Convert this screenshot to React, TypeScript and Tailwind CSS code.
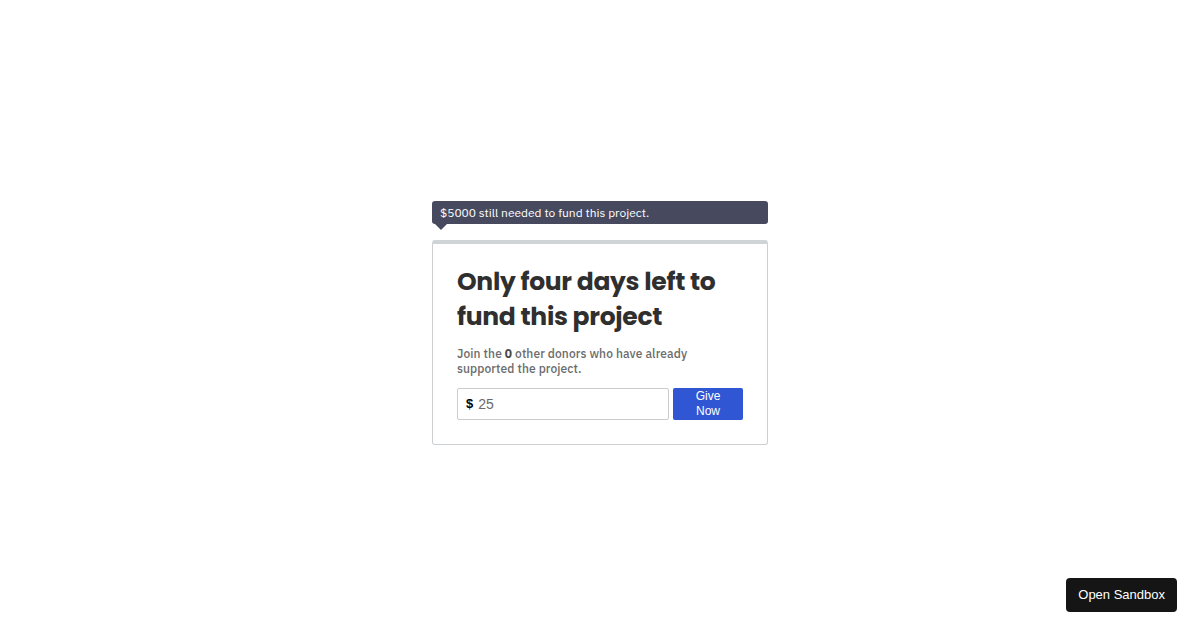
import React, { useState } from 'react';

export default function App() {
  const [amount, setAmount] = useState('25');

  return (
    <div className="relative w-full h-[630px] bg-white overflow-hidden">
      <div className="flex h-full items-center justify-center">
        <div className="w-[336px] mt-[16px]">
          {/* Tooltip */}
          <div className="relative h-[23px] rounded-[3px] bg-[#474a5f] px-[8px] flex items-center text-[12px] text-white font-['IBM_Plex_Sans','Noto_Sans',sans-serif]">
            $5000 still needed to fund this project.
            <span className="absolute left-[3px] top-full w-0 h-0 border-l-[6px] border-r-[6px] border-t-[6px] border-l-transparent border-r-transparent border-t-[#474a5f]" />
          </div>

          {/* Card */}
          <div className="mt-[16px] rounded-[3px] border border-[#ccd0d3] border-t-[4px] border-t-[#cfd4d6] px-[24px] pt-[20px] pb-[24px]">
            <h1 className="text-[25px] leading-[35px] font-bold tracking-[-0.3px] text-[#2f2f2f] font-['Poppins','Inter',sans-serif]">
              Only four days left to fund this project
            </h1>
            <p className="mt-[12px] max-w-[240px] text-[12px] leading-[15px] text-[#6b6b6b] font-['IBM_Plex_Sans','Noto_Sans',sans-serif] font-medium tracking-[0.1px]">
              Join the <b className="font-bold text-[#4a4a4a]">0</b> other donors who have already supported the project.
            </p>
            <div className="mt-[12px] flex gap-[4px]">
              <label className="flex items-center h-[32px] w-[212px] border border-[#cccccc] rounded-[2px] px-[8px]">
                <span className="text-[13px] font-bold text-black font-['Liberation_Sans',sans-serif] mr-[5px]">$</span>
                <input
                  value={amount}
                  onChange={(e) => setAmount(e.target.value)}
                  className="w-full outline-none text-[14px] text-[#6a6a6a] font-['Liberation_Sans',sans-serif]"
                />
              </label>
              <button className="h-[32px] w-[70px] rounded-[2px] bg-[#3056d3] text-white text-[12px] leading-[15px] font-['Liberation_Sans',sans-serif]">
                Give
                <br />
                Now
              </button>
            </div>
          </div>
        </div>
      </div>

      <button className="absolute right-[23px] bottom-[18px] h-[34px] px-[12px] rounded-[4px] bg-[#151515] text-white text-[13px] font-['Liberation_Sans',sans-serif]">
        Open Sandbox
      </button>
    </div>
  );
}
